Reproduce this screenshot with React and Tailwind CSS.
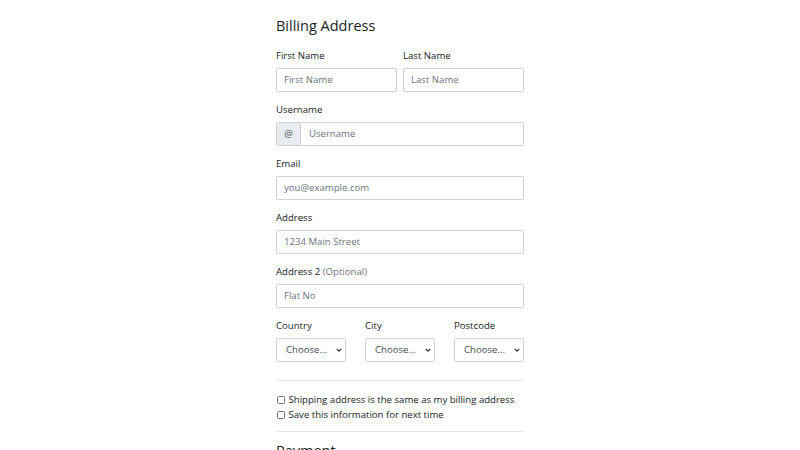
import React from "react";

const font = { fontFamily: '"Open Sans", "Noto Sans", sans-serif' };

function Label({ children }) {
  return (
    <div className="h-[15px] leading-[15px] mb-[5px] text-[9.6px] text-[#212529] whitespace-nowrap">{children}</div>
  );
}

function Input({ placeholder }) {
  return (
    <div className="h-[24px] w-full rounded-[2px] border border-[#ced4da] bg-white flex items-center pl-[7px] text-[9.6px] text-[#6c757d]">
      {placeholder}
    </div>
  );
}

function Select() {
  return (
    <div className="h-[24px] w-[70px] rounded-[2px] border border-[#ced4da] bg-white flex items-center justify-between pl-[9px] pr-[2px] text-[9.6px] text-[#495057]">
      <span>Choose...</span>
      <svg width="8" height="8" viewBox="0 0 8 8">
        <path d="M1.8 3 L4 5.2 L6.2 3" fill="none" stroke="#343a40" strokeWidth="1.1" />
      </svg>
    </div>
  );
}

function Checkbox({ children }) {
  return (
    <div className="flex items-center h-[14.5px] leading-[14.5px] text-[9.6px] text-[#212529] whitespace-nowrap">
      <span className="w-[8px] h-[8px] shrink-0 border border-[#767676] rounded-[1.5px] ml-[1px] mr-[3.5px] bg-white" />
      <span>{children}</span>
    </div>
  );
}

export default function App() {
  return (
    <div className="w-[800px] h-[450px] bg-white overflow-hidden" style={font}>
      <div className="mx-auto w-[248px] pt-[17px]">
        <div className="h-[18px] leading-[18px] text-[14.5px] text-[#212529] mb-[13px]">Billing Address</div>

        <div className="flex gap-[6px] mb-[10px]">
          <div className="w-[121px]">
            <Label>First Name</Label>
            <Input placeholder="First Name" />
          </div>
          <div className="w-[121px]">
            <Label>Last Name</Label>
            <Input placeholder="Last Name" />
          </div>
        </div>

        <div className="mb-[10px]">
          <Label>Username</Label>
          <div className="h-[24px] flex">
            <div className="w-[25px] h-full bg-[#e9ecef] border border-[#ced4da] rounded-l-[2px] flex items-center justify-center text-[9.6px] text-[#495057]">@</div>
            <div className="flex-1 h-full border border-l-0 border-[#ced4da] rounded-r-[2px] flex items-center pl-[8px] text-[9.6px] text-[#6c757d]">Username</div>
          </div>
        </div>

        <div className="mb-[10px]">
          <Label>Email</Label>
          <Input placeholder="you@example.com" />
        </div>

        <div className="mb-[10px]">
          <Label>Address</Label>
          <Input placeholder="1234 Main Street" />
        </div>

        <div className="mb-[10px]">
          <Label>
            Address 2 <span className="text-[#6c757d]">(Optional)</span>
          </Label>
          <Input placeholder="Flat No" />
        </div>

        <div className="flex justify-between">
          <div>
            <Label>Country</Label>
            <Select />
          </div>
          <div>
            <Label>City</Label>
            <Select />
          </div>
          <div>
            <Label>Postcode</Label>
            <Select />
          </div>
        </div>

        <div className="mt-[18px] border-t border-[#e6e6e6] mb-[12px]" />

        <Checkbox>Shipping address is the same as my billing address</Checkbox>
        <Checkbox>Save this information for next time</Checkbox>

        <div className="mt-[9px] border-t border-[#e6e6e6] mb-[10px]" />

        <div className="h-[18px] leading-[18px] text-[14.5px] text-[#212529]">Payment</div>
      </div>
    </div>
  );
}
